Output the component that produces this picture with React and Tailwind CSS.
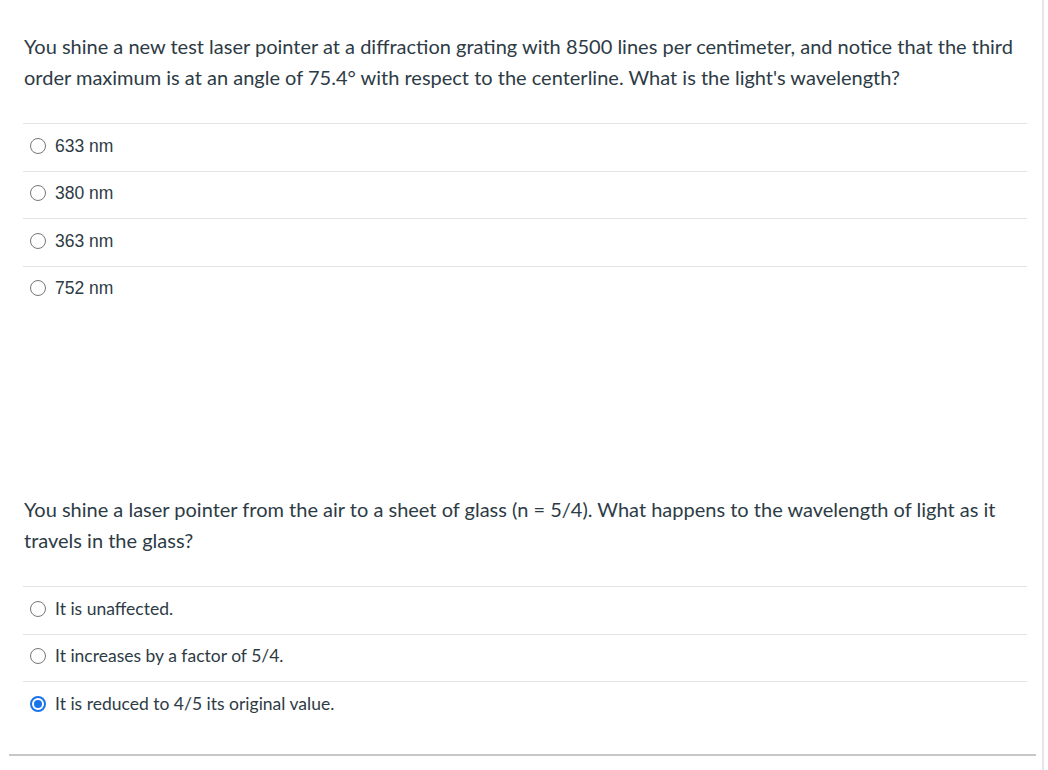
import React from "react";

const questions = [
  {
    id: 1,
    text: "You shine a new test laser pointer at a diffraction grating with 8500 lines per centimeter, and notice that the third order maximum is at an angle of 75.4° with respect to the centerline. What is the light's wavelength?",
    answerFont: "font-['Liberation_Sans',Arial,sans-serif]",
    answers: ["633 nm", "380 nm", "363 nm", "752 nm"],
    selected: -1,
  },
  {
    id: 2,
    text: "You shine a laser pointer from the air to a sheet of glass (n = 5/4). What happens to the wavelength of light as it travels in the glass?",
    answerFont: "font-['Lato','Noto_Sans',sans-serif]",
    answers: ["It is unaffected.", "It increases by a factor of 5/4.", "It is reduced to 4/5 its original value."],
    selected: 2,
  },
];

const Radio = ({ checked }) => {
  if (checked) {
    return (
      <span className="flex h-[16px] w-[16px] items-center justify-center rounded-full border-2 border-[#1a73e8] bg-white">
        <span className="h-[8px] w-[8px] rounded-full bg-[#1a73e8]" />
      </span>
    );
  }
  return <span className="block h-[16px] w-[16px] rounded-full border border-[#767676] bg-white" />;
};

const Question = ({ q }) => {
  return (
    <div>
      <p className="pr-[10px] text-[20px] leading-[31px]">{q.text}</p>
      <div className="mt-[30px] mr-[15px] ml-[-1px]">
        {q.answers.map((a, i) => (
          <div key={a} className="flex h-[47.5px] items-center gap-[9px] border-t border-[#e3e3e3] pb-[3px] pl-[7px]">
            <Radio checked={q.selected === i} />
            <span className={`text-[17.5px] ${q.answerFont}`}>{a}</span>
          </div>
        ))}
      </div>
    </div>
  );
};

const App = () => {
  return (
    <div className="h-[770px] w-[1048px] overflow-hidden bg-white font-['Lato','Noto_Sans',sans-serif] text-[#2d3b45]">
      <div className="flex h-full">
        <div className="w-[1042px]">
          <div className="pt-[31px] pl-[24px]">
            <Question q={questions[0]} />
          </div>
          <div className="mt-[181px] pl-[24px]">
            <Question q={questions[1]} />
          </div>
          <div className="mt-[25px] ml-[9px] mr-[6px] border-t-2 border-[#c7c7c7]" />
        </div>
        <div className="w-[2px] bg-[#e6e6e6]" />
      </div>
    </div>
  );
};

export default App;
